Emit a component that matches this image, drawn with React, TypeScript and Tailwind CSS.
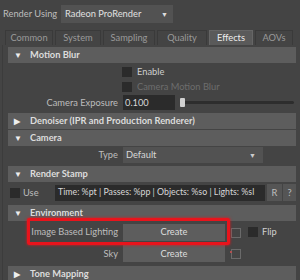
export default function App() {
  return (
    <div className="w-[300px] h-[280px] bg-[#444444] overflow-hidden text-[9.3px] text-[#bdbdbd] font-['Lato',sans-serif] leading-none">
      {/* Render Using */}
      <div className="h-[28px] flex items-center pl-[3px] gap-[4px]">
        <span className="w-[54px] whitespace-nowrap">Render Using</span>
        <div className="w-[112px] h-[18px] bg-[#525252] flex items-center pl-[4px] text-[#e0e0e0]">
          <span className="flex-1">Radeon ProRender</span>
          <span className="w-[12px] text-[7px] text-[#ddd]">▼</span>
        </div>
      </div>

      {/* Tabs */}
      <div className="h-[17px] flex items-end pl-[5px] gap-[2px]">
        <Tab w="w-[48px]" label="Common" />
        <Tab w="w-[46px]" label="System" />
        <Tab w="w-[52px]" label="Sampling" />
        <Tab w="w-[50px]" label="Quality" />
        <Tab w="w-[44px]" label="Effects" active />
        <Tab w="w-[38px]" label="AOVs" />
      </div>

      <div className="flex flex-col pl-[5px] pr-[4px] pt-[2px] border-l border-[#3c3c3c] ml-[2px]">
        <Header label="Motion Blur" open />
        <div className="h-[17px] flex items-center pl-[114px] gap-[5px]">
          <Box />
          <span className="text-[#cfcfcf]">Enable</span>
        </div>
        <div className="h-[14px] flex items-center pl-[114px] gap-[5px]">
          <Box />
          <span className="text-[#6d6d6d]">Camera Motion Blur</span>
        </div>
        <div className="h-[17px] flex items-center">
          <span className="w-[115px] text-right pr-[5px]">Camera Exposure</span>
          <div className="w-[52px] h-[15px] bg-[#2b2b2b] flex items-center pl-[2px] text-[#d8d8d8]">0.100</div>
          <div className="flex-1 relative h-[15px] flex items-center pl-[5px] pr-[2px]">
            <div className="flex-1 h-[3px] bg-[#2d2d2d] rounded-full" />
            <div className="absolute left-[5px] w-[5px] h-[9px] bg-[#d0d0d0] rounded-[1px]" />
          </div>
        </div>
        <div className="mt-[2px]">
          <Header label="Denoiser (IPR and Production Renderer)" />
        </div>
        <div className="mt-[1px]">
          <Header label="Camera" open />
        </div>
        <div className="h-[18px] flex items-center">
          <span className="w-[115px] text-right pr-[5px]">Type</span>
          <div className="w-[140px] h-[16px] bg-[#525252] flex items-center pl-[3px] text-[#d8d8d8]">
            <span className="flex-1">Default</span>
            <span className="w-[14px] text-[7px] text-[#ccc]">▼</span>
          </div>
        </div>
        <div className="mt-[2px]">
          <Header label="Render Stamp" open />
        </div>
        <div className="h-[21px] flex items-center">
          <div className="w-[10px] h-[10px] bg-[#2b2b2b] ml-[2px]" />
          <span className="ml-[3px] w-[32px]">Use</span>
          <div className="w-[210px] h-[16px] bg-[#2b2b2b] flex items-center pl-[3px] text-[8.8px] text-[#d8d8d8] whitespace-nowrap overflow-hidden">
            Time: %pt | Passes: %pp | Objects: %so | Lights: %sl
          </div>
          <div className="ml-[2px] w-[15px] h-[17px] bg-[#555555] flex items-center justify-center">R</div>
          <div className="ml-[1px] w-[13px] h-[17px] bg-[#555555] flex items-center justify-center">?</div>
        </div>
        <div className="mt-[2px]">
          <Header label="Environment" open />
        </div>
        <div className="h-[22px] flex items-center relative">
          <div className="absolute left-[19px] top-[-3px] w-[203px] h-[27px] border-[3px] border-[#e8141c] rounded-[2px] shadow-[0_0_3px_#e8141c]" />
          <span className="w-[115px] text-right pr-[5px]">Image Based Lighting</span>
          <div className="w-[102px] h-[17px] bg-[#5d5d5d] flex items-center justify-center text-[#dddddd]">Create</div>
          <MapIcon />
          <div className="ml-[6px] w-[10px] h-[10px] bg-[#2b2b2b]" />
          <span className="ml-[4px] text-[#cfcfcf]">Flip</span>
        </div>
        <div className="h-[21px] flex items-center">
          <span className="w-[115px] text-right pr-[5px]">Sky</span>
          <div className="w-[102px] h-[17px] bg-[#5d5d5d] flex items-center justify-center text-[#dddddd]">Create</div>
          <MapIcon dot />
        </div>
        <div className="mt-[2px]">
          <Header label="Tone Mapping" />
        </div>
      </div>
    </div>
  );
}

function Tab({ w, label, active }: { w: string; label: string; active?: boolean }) {
  return (
    <div
      className={`${w} h-[15px] flex items-center justify-center border border-b-0 ${
        active ? "bg-[#5a5a5a] border-[#666] text-[#eeeeee]" : "bg-[#444444] border-[#3a3a3a] text-[#9a9a9a]"
      }`}
    >
      {label}
    </div>
  );
}

function Header({ label, open }: { label: string; open?: boolean }) {
  return (
    <div className="h-[16px] bg-[#5d5d5d] flex items-center pl-[6px] gap-[8px] font-bold text-[#dcdcdc]">
      <span className="w-[8px] text-[8px] text-[#eeeeee]">{open ? "▼" : "▶"}</span>
      <span>{label}</span>
    </div>
  );
}

function Box() {
  return <div className="w-[10px] h-[10px] bg-[#2b2b2b]" />;
}

function MapIcon({ dot }: { dot?: boolean }) {
  return (
    <svg width="13" height="13" viewBox="0 0 13 13" className="ml-[4px]">
      <rect x="2.5" y="2.5" width="9" height="9" fill="none" stroke="#6a6a6a" strokeWidth="1" />
      {dot && <rect x="1" y="4" width="2" height="2" fill="#b05050" />}
    </svg>
  );
}
